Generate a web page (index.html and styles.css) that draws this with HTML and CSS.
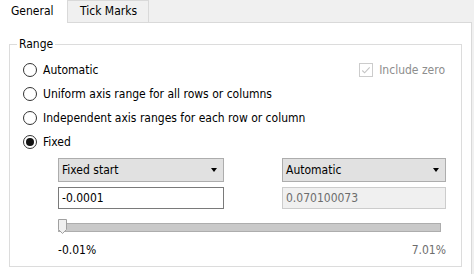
FILE: index.html
```html
<!DOCTYPE html>
<html>
<head>
<meta charset="utf-8">
<link rel="stylesheet" href="styles.css">
</head>
<body>
<div class="window">
  <div class="tabs">
    <div class="tab active">General</div>
    <div class="tab">Tick Marks</div>
  </div>
  <div class="panel">
    <fieldset class="group">
      <legend>Range</legend>
      <div class="row first">
        <div class="radio-row"><span class="radio"></span><span>Automatic</span></div>
        <div class="check-row"><span class="check"><svg width="13" height="13" viewBox="0 0 13 13"><path d="M2.5 6.5 L5 9 L10.5 3" fill="none" stroke="#c4c4c4" stroke-width="1.2"/></svg></span><span>Include zero</span></div>
      </div>
      <div class="radio-row"><span class="radio"></span><span>Uniform axis range for all rows or columns</span></div>
      <div class="radio-row"><span class="radio"></span><span>Independent axis ranges for each row or column</span></div>
      <div class="radio-row"><span class="radio checked"></span><span>Fixed</span></div>
      <div class="fixed">
        <div class="cols">
          <div class="col">
            <div class="combo"><span>Fixed start</span><span class="arrow"></span></div>
            <div class="input">-0.0001</div>
          </div>
          <div class="col">
            <div class="combo"><span>Automatic</span><span class="arrow"></span></div>
            <div class="input disabled">0.070100073</div>
          </div>
        </div>
        <div class="slider">
          <div class="track"></div>
          <svg class="thumb" width="9" height="15" viewBox="0 0 9 15"><path d="M0.5 0.5 H8.5 V10.5 L4.5 14.5 L0.5 10.5 Z" fill="#f0f0f0" stroke="#a0a0a0"/></svg>
        </div>
        <div class="labels"><span>-0.01%</span><span class="max">7.01%</span></div>
      </div>
    </fieldset>
  </div>
</div>
</body>
</html>
```
FILE: styles.css
```css
* { box-sizing: border-box; }
html, body { margin: 0; padding: 0; }
body {
  width: 474px; height: 274px; overflow: hidden;
  background: #f0f0f0;
  font-family: "DejaVu Sans Condensed", "DejaVu Sans", Verdana, sans-serif;
  font-size: 12px;
  color: #000;
}
.window { width: 472px; height: 274px; display: flex; flex-direction: column; }
.tabs {
  height: 23px; display: flex; align-items: flex-end;
  border-bottom: 1px solid #d9d9d9;
  background: #f0f0f0;
}
.tab {
  height: 22px; padding: 0 11px 0 12px; line-height: 21px;
  border: 1px solid #d9d9d9; border-bottom: none;
  background: #f0f0f0;
}
.tab.active {
  background: #fff; border: none; height: 23px; line-height: 23px;
  margin-bottom: -1px; width: 67px; padding-left: 11px;
}
.tab + .tab { border-left: 1px solid #d9d9d9; }
.panel {
  flex: 1; background: #fff;
  border-right: 1px solid #d9d9d9;
  padding: 14px 9px 8px 9px;
}
.group {
  margin: 0; height: 230px;
  border: 1px solid #dcdcdc; border-radius: 0;
  padding: 7px 14px 0 13px;
}
.group legend { padding: 0 2px; margin-left: -6px; font-size: 12px; }
.row { display: flex; justify-content: space-between; align-items: center; }
.radio-row { display: flex; align-items: center; height: 24px; gap: 6px; }
.radio {
  width: 14px; height: 14px; border-radius: 50%;
  border: 1px solid #333; background: #fff; position: relative;
}
.radio.checked::after {
  content: ""; position: absolute; left: 2px; top: 2px;
  width: 8px; height: 8px; border-radius: 50%; background: #111;
}
.check-row { display: flex; align-items: center; gap: 6px; color: #8d8d8d; margin-right: 2px; }
.check { width: 14px; height: 14px; border: 1px solid #cccccc; display: flex; }
.fixed { padding-left: 35px; padding-top: 4px; }
.cols { display: flex; justify-content: space-between; }
.col { display: flex; flex-direction: column; gap: 5px; width: 166px; }
.col + .col { width: 164px; margin-right: 1px; }
.combo {
  height: 24px; background: #e1e1e1; border: 1px solid #adadad;
  display: flex; align-items: center; justify-content: space-between;
  padding: 0 6px 0 3px;
}
.arrow {
  width: 0; height: 0; border-left: 3.5px solid transparent;
  border-right: 3.5px solid transparent; border-top: 4px solid #000;
}
.input {
  height: 22px; border: 1px solid #7a7a7a; background: #fff;
  padding: 0 3px; line-height: 20px;
}
.input.disabled { border-color: #cccccc; background: #f0f0f0; color: #6d6d6d; }
.slider { position: relative; height: 16px; margin-top: 10px; margin-right: 6px; display: flex; align-items: center; }
.track { flex: 1; height: 9px; background: #c9c9c9; border: 1px solid #adadad; }
.thumb { position: absolute; left: 0; top: 0; }
.labels { display: flex; justify-content: space-between; margin-top: 8px; margin-right: 1px; }
.labels .max { color: #6d6d6d; }
```
